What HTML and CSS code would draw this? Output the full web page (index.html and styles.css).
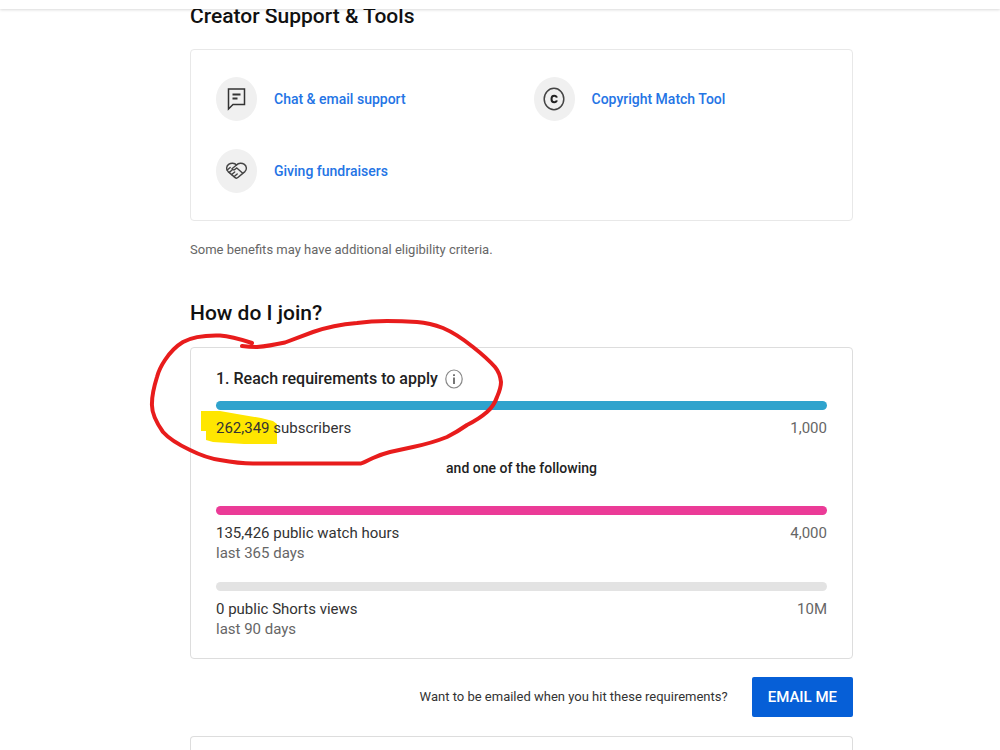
FILE: index.html
```html
<!DOCTYPE html>
<html lang="en">
<head>
    <meta charset="UTF-8">
    <meta name="viewport" content="width=device-width, initial-scale=1.0">
    <title>Creator Support &amp; Tools</title>
    <link rel="stylesheet" href="styles.css">
</head>
<body>

<header class="topbar"></header>

<main class="page">
    <h2 class="heading">Creator Support &amp; Tools</h2>

    <section class="card tools">
        <a class="tool" href="#support">
            <span class="tool-icon">
                <svg width="24" height="26" viewBox="0 0 24 26" fill="none" stroke="#333" stroke-width="1.5">
                    <path d="M3.5 3h16v15.5H8L3.5 23z"/>
                    <path d="M7.5 8.5h8M7.5 12.5h5" stroke-width="2"/>
                </svg>
            </span>
            Chat &amp; email support
        </a>
        <a class="tool" href="#copyright">
            <span class="tool-icon">
                <svg width="24" height="26" viewBox="0 0 24 26" fill="none" stroke="#444">
                    <ellipse cx="12" cy="13" rx="9.8" ry="10.7" stroke-width="1.5"/>
                    <path d="M14.8 11.6C14.5 10.3 13.5 9.7 12.2 9.7c-1.8 0-2.7 1.2-2.7 3.3s.9 3.3 2.7 3.3c1.3 0 2.3-.6 2.6-1.9" stroke="#222" stroke-width="2"/>
                </svg>
            </span>
            Copyright Match Tool
        </a>
        <a class="tool" href="#fundraisers">
            <span class="tool-icon">
                <svg width="24" height="26" viewBox="0 0 24 26" fill="none" stroke="#444" stroke-width="1.4" stroke-linejoin="round" stroke-linecap="round">
                    <path d="M11.5 7C9.5 4.7 6 4.7 3.6 6.4c-2.5 2-2.6 5-.5 7.2l7 6c.9.8 1.900.8 2.800 0l7-6c2.100-2.200 2-5.200-.5-7.200-2.400-1.700-5.900-1.700-7.900.6z"/>
                    <path d="M11.5 7L7 10.8c.8 1.3 2 1.4 3.100.4l1.700-1.300 5.700 5.100"/>
                    <path d="M2.200 12l3-2.500M4.200 14.400l2.600-2.200M6.700 16.500l3-2.500M9.200 18.500l3-2.500"/>
                </svg>
            </span>
            Giving fundraisers
        </a>
    </section>

    <p class="note">Some benefits may have additional eligibility criteria.</p>

    <h2 class="heading">How do I join?</h2>

    <section class="card requirements">
        <svg class="marker" width="78" height="36" viewBox="200 410 78 36">
            <path fill="#ffe600" d="M201 411h19l17 3 24 4 12 3 4 3v20h-33l-31-2-7-2V431h-5z"/>
        </svg>

        <h3 class="step">
            1. Reach requirements to apply
            <button class="info" type="button" aria-label="More information">
                <svg width="18" height="20" viewBox="0 0 18 20" fill="none" stroke="#888">
                    <ellipse cx="9" cy="10" rx="8.2" ry="9" stroke-width="1.2"/>
                    <path d="M9 8.5v6.5M9 5.2v1.7" stroke="#555" stroke-width="1.6"/>
                </svg>
            </button>
        </h3>

        <div class="bar bar-blue"></div>
        <div class="row">
            <p>262,349 subscribers</p>
            <p class="goal">1,000</p>
        </div>

        <p class="divider">and one of the following</p>

        <div class="bar bar-pink"></div>
        <div class="row">
            <p>135,426 public watch hours<br><span class="period">last 365 days</span></p>
            <p class="goal">4,000</p>
        </div>

        <div class="bar bar-next"></div>
        <div class="row">
            <p>0 public Shorts views<br><span class="period">last 90 days</span></p>
            <p class="goal">10M</p>
        </div>

        <svg class="scribble" width="370" height="160" viewBox="140 310 370 160">
            <path fill="none" stroke="#e81c1c" stroke-width="4" stroke-linecap="round" stroke-linejoin="round" d="M252 343C240 339 229 336 220 335.5C202 335 192 337 183 342Q173 348 165 360Q159 369 157 377Q152 393 152 403Q151 415 163 432Q171 441 190 450Q206 458 220 460Q239 463.5 253 463.5H361Q365 462 373 458Q382 454 390 452L413 447Q432 443 447 437Q457 432 467 425Q479 419 487 412Q494 406 497 397Q501 388 501 382Q500 373 495 367Q487 358 473 347Q457 334 443 328Q430 323 417 322Q402 321 387 321Q371 321 357 323Q333 325 313 332L285 342.5Q269 346 257 347Q250 347 242 346"/>
        </svg>
    </section>

    <div class="notify">
        <p>Want to be emailed when you hit these requirements?</p>
        <button class="email-btn" type="button">EMAIL ME</button>
    </div>

    <section class="card next-step"></section>
</main>

</body>
</html>
```

FILE: styles.css
```css
* {
    box-sizing: border-box;
}
body {
    font-family: Roboto, Arial, sans-serif;
    font-size: 15px;
    line-height: 20px;
    background-color: #fff;
    color: #333;
    margin: 0;
}
h2, h3, p {
    margin: 0;
}
.topbar {
    position: sticky;
    top: 0;
    z-index: 2;
    height: 9px;
    background-color: #fff;
    box-shadow: 0 1px 3px rgba(0, 0, 0, 0.15);
}
.page {
    margin: 0 147px 0 190px;
}
.heading {
    font-size: 21px;
    font-weight: 500;
    line-height: 24px;
    color: #111;
    margin-top: -5px;
}
.card {
    border: 1px solid #ddd;
    border-radius: 4px;
}

/* Benefit links */
.tools {
    display: grid;
    grid-template-columns: 1fr 1fr;
    gap: 28px 24px;
    margin-top: 21px;
    padding: 27px 25px;
    border-color: #e8e8e8;
}
.tool {
    display: flex;
    align-items: center;
    gap: 17px;
    font-size: 14px;
    font-weight: 500;
    color: #2474e5;
    text-decoration: none;
}
.tool-icon {
    display: flex;
    align-items: center;
    justify-content: center;
    width: 41px;
    height: 44px;
    border-radius: 50%;
    background-color: #f0f0f0;
}
.note {
    margin: 19px 0 46px;
    font-size: 13px;
    color: #666;
}

/* Requirements */
.requirements {
    position: relative;
    z-index: 0;
    margin-top: 22px;
    padding: 21px 25px 19px;
}
.step {
    display: flex;
    align-items: center;
    gap: 7px;
    font-size: 16px;
    font-weight: 500;
    color: #222;
}
.info {
    display: flex;
    padding: 0;
    border: none;
    background: none;
    cursor: pointer;
}
.bar {
    height: 9px;
    border-radius: 5px;
    background-color: #e3e3e3;
}
.bar-blue {
    margin-top: 12px;
    background-color: #2fa3cd;
}
.bar-pink {
    margin-top: 28px;
    background-color: #eb3b97;
}
.bar-next {
    margin-top: 19px;
}
.row {
    display: flex;
    justify-content: space-between;
    margin-top: 8px;
}
.period, .goal {
    color: #666;
}
.divider {
    margin-top: 20px;
    font-size: 14px;
    font-weight: 500;
    text-align: center;
    color: #222;
}
.marker {
    position: absolute;
    z-index: -1;
    left: 9px;
    top: 62px;
}
.scribble {
    position: absolute;
    left: -51px;
    top: -38px;
    pointer-events: none;
}

/* Email reminder */
.notify {
    display: flex;
    align-items: center;
    justify-content: flex-end;
    gap: 24px;
    margin: 18px 0 19px;
    font-size: 13px;
}
.email-btn {
    height: 40px;
    padding: 0 16px;
    border: none;
    border-radius: 2px;
    background-color: #065fd7;
    color: #fff;
    font-family: inherit;
    font-size: 15px;
    font-weight: 500;
    cursor: pointer;
}
.next-step {
    height: 14px;
    border-bottom: none;
    border-radius: 4px 4px 0 0;
}
```
